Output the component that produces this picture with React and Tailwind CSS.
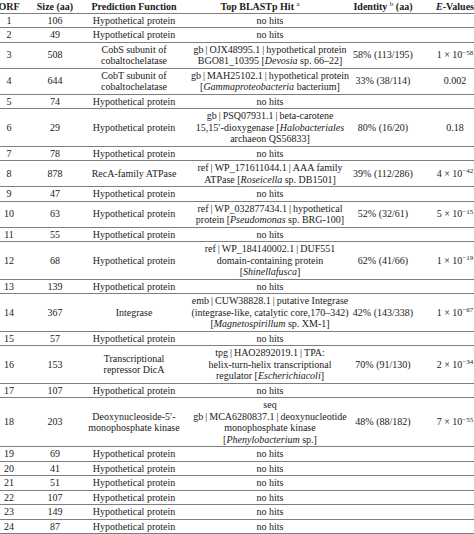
import React from 'react';

const Sp = ({ children }) => <i>{children}</i>;

// thin separator like the journal typesetting
const B = () => <>{'\u2009|\u2009'}</>;

const Exp = ({ m, p }) => (
  <span>
    {m} × 10<sup className="text-[7px]">−{p}</sup>
  </span>
);

const rows = [
  { orf: 1, size: 106, fn: 'Hypothetical protein', hit: 'no hits' },
  { orf: 2, size: 49, fn: 'Hypothetical protein', hit: 'no hits' },
  {
    orf: 3, size: 508,
    fn: <>CobS subunit of<br />cobaltochelatase</>,
    hit: <>gb<B />OJX48995.1<B />hypothetical protein<br />BGO81_10395 [<Sp>Devosia</Sp> sp. 66–22]</>,
    id: '58% (113/195)', e: <Exp m="1" p="58" />,
  },
  {
    orf: 4, size: 644,
    fn: <>CobT subunit of<br />cobaltochelatase</>,
    hit: <>gb<B />MAH25102.1<B />hypothetical protein<br />[<Sp>Gammaproteobacteria</Sp> bacterium]</>,
    id: '33% (38/114)', e: '0.002',
  },
  { orf: 5, size: 74, fn: 'Hypothetical protein', hit: 'no hits' },
  {
    orf: 6, size: 29, fn: 'Hypothetical protein',
    hit: <>gb<B />PSQ07931.1<B />beta-carotene<br />15,15′-dioxygenase [<Sp>Halobacteriales</Sp><br />archaeon QS56833]</>,
    id: '80% (16/20)', e: '0.18',
  },
  { orf: 7, size: 78, fn: 'Hypothetical protein', hit: 'no hits' },
  {
    orf: 8, size: 878, fn: 'RecA-family ATPase',
    hit: <>ref<B />WP_171611044.1<B />AAA family<br />ATPase [<Sp>Roseicella</Sp> sp. DB1501]</>,
    id: '39% (112/286)', e: <Exp m="4" p="42" />,
  },
  { orf: 9, size: 47, fn: 'Hypothetical protein', hit: 'no hits' },
  {
    orf: 10, size: 63, fn: 'Hypothetical protein',
    hit: <>ref<B />WP_032877434.1<B />hypothetical<br />protein [<Sp>Pseudomonas</Sp> sp. BRG-100]</>,
    id: '52% (32/61)', e: <Exp m="5" p="15" />,
  },
  { orf: 11, size: 55, fn: 'Hypothetical protein', hit: 'no hits' },
  {
    orf: 12, size: 68, fn: 'Hypothetical protein',
    hit: <>ref<B />WP_184140002.1<B />DUF551<br />domain-containing protein<br />[<Sp>Shinellafusca</Sp>]</>,
    id: '62% (41/66)', e: <Exp m="1" p="19" />,
  },
  { orf: 13, size: 139, fn: 'Hypothetical protein', hit: 'no hits' },
  {
    orf: 14, size: 367, fn: 'Integrase',
    hit: <>emb<B />CUW38828.1<B />putative Integrase<br />(integrase-like, catalytic core,170–342)<br />[<Sp>Magnetospirillum</Sp> sp. XM-1]</>,
    id: '42% (143/338)', e: <Exp m="1" p="67" />,
  },
  { orf: 15, size: 57, fn: 'Hypothetical protein', hit: 'no hits' },
  {
    orf: 16, size: 153,
    fn: <>Transcriptional<br />repressor DicA</>,
    hit: <>tpg<B />HAO2892019.1<B />TPA:<br />helix-turn-helix transcriptional<br />regulator [<Sp>Escherichiacoli</Sp>]</>,
    id: '70% (91/130)', e: <Exp m="2" p="34" />,
  },
  { orf: 17, size: 107, fn: 'Hypothetical protein', hit: 'no hits' },
  {
    orf: 18, size: 203,
    fn: <>Deoxynucleoside-5′-<br />monophosphate kinase</>,
    hit: <>seq<br />gb<B />MCA6280837.1<B />deoxynucleotide<br />monophosphate kinase<br />[<Sp>Phenylobacterium</Sp> sp.]</>,
    id: '48% (88/182)', e: <Exp m="7" p="55" />,
  },
  { orf: 19, size: 69, fn: 'Hypothetical protein', hit: 'no hits' },
  { orf: 20, size: 41, fn: 'Hypothetical protein', hit: 'no hits' },
  { orf: 21, size: 51, fn: 'Hypothetical protein', hit: 'no hits' },
  { orf: 22, size: 107, fn: 'Hypothetical protein', hit: 'no hits' },
  { orf: 23, size: 149, fn: 'Hypothetical protein', hit: 'no hits' },
  { orf: 24, size: 87, fn: 'Hypothetical protein', hit: 'no hits' },
];

const td = 'border-b border-[#7f7f7f] py-[1px] px-0 text-center align-middle whitespace-nowrap';
const th = 'border-b border-[#7f7f7f] py-[0.5px] px-0 text-center font-bold whitespace-nowrap';

export default function App() {
  return (
    <div className="w-[474px] h-[534px] overflow-hidden bg-white text-[#1a1a1a] font-['Liberation_Serif',serif] text-[10px] leading-[11.5px]">
      <table className="table-fixed border-collapse ml-[-14px] w-[508px]">
        <colgroup>
          <col className="w-[46px]" />
          <col className="w-[46px]" />
          <col className="w-[112px]" />
          <col className="w-[160px]" />
          <col className="w-[66px]" />
          <col className="w-[78px]" />
        </colgroup>
        <thead>
          <tr>
            <th className={th}>ORF</th>
            <th className={th}>Size (aa)</th>
            <th className={th}>Prediction Function</th>
            <th className={`${th} pr-[20px]`}>
              Top BLASTp Hit <sup className="text-[7px] font-normal">a</sup>
            </th>
            <th className={th}>
              Identity <sup className="text-[7px] font-normal">b</sup> (aa)
            </th>
            <th className={th}>
              <i>E</i>-Values
            </th>
          </tr>
        </thead>
        <tbody>
          {rows.map((r) => (
            <tr key={r.orf}>
              <td className={td}>{r.orf}</td>
              <td className={td}>{r.size}</td>
              <td className={td}>{r.fn}</td>
              <td className={td}>{r.hit}</td>
              <td className={td}>{r.id}</td>
              <td className={td}>{r.e}</td>
            </tr>
          ))}
        </tbody>
      </table>
    </div>
  );
}
